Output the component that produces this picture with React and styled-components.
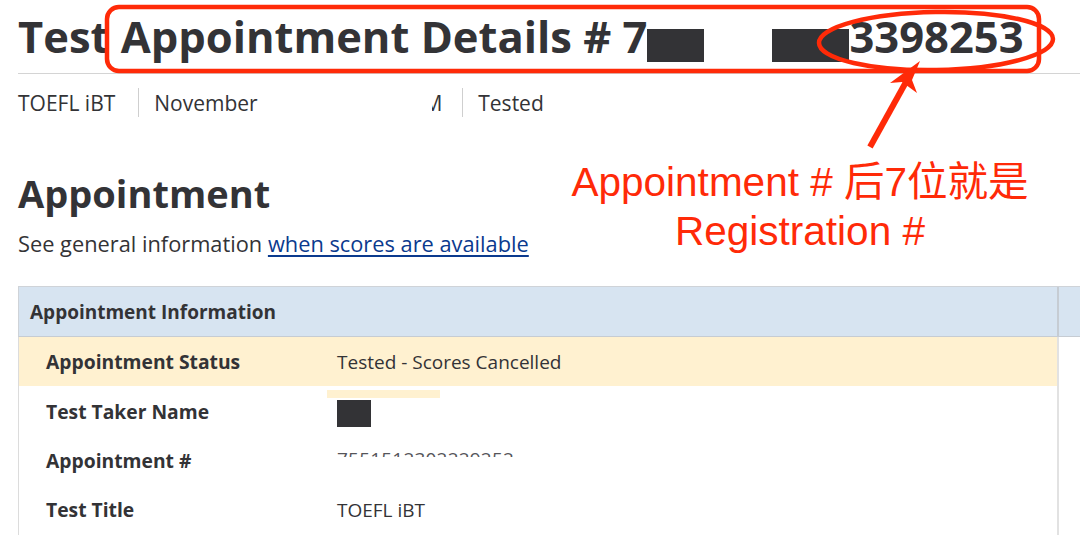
import React from 'react';
import styled, { createGlobalStyle } from 'styled-components';

const GlobalStyle = createGlobalStyle`
  html, body {
    margin: 0;
    padding: 0;
    background: #fff;
    overflow: hidden;
  }

  body {
    font-family: 'Open Sans', 'Noto Sans', sans-serif;
    color: #333336;
  }
`;

const Page = styled.div`
  position: relative;
  width: 1080px;
  height: 535px;
  overflow: hidden;
  padding-left: 18px;
  box-sizing: border-box;
`;

const Title = styled.h1`
  margin: 0;
  padding: 10px 0 10px;
  font-size: 43.5px;
  line-height: 53px;
  font-weight: 700;
  white-space: nowrap;
  border-bottom: 1px solid #d4d4d4;
`;

const Redact = styled.span`
  display: inline-block;
  width: ${(p) => p.$w}px;
  height: ${(p) => p.$h || 33}px;
  margin-left: ${(p) => p.$gap || 0}px;
  background: #333336;
  vertical-align: ${(p) => p.$v ?? -9}px;
`;

const MetaRow = styled.div`
  display: flex;
  align-items: center;
  margin-top: 14px;
  height: 29px;
  font-size: 21px;
  white-space: nowrap;
`;

const MetaItem = styled.span`
  display: inline-flex;
  align-items: center;
  width: ${(p) => (p.$w ? `${p.$w}px` : 'auto')};
`;

const MetaSep = styled.span`
  width: 1px;
  height: 29px;
  background: #cfcfcf;
  margin: 0 15px 0 ${(p) => p.$left || 20}px;
`;

const CutGlyph = styled.span`
  display: inline-block;
  width: 10px;
  overflow: hidden;
  margin-left: auto;
  direction: rtl;
`;

const SectionTitle = styled.h2`
  margin: 53px 0 0;
  font-size: 38px;
  line-height: 46px;
  font-weight: 700;
`;

const Lead = styled.p`
  margin: 14px 0 0;
  font-size: 21.8px;
  line-height: 28px;
  white-space: nowrap;

  a {
    color: #0b3a8e;
    text-decoration: underline;
    text-underline-offset: 3px;
  }
`;

const Table = styled.div`
  margin-top: 28px;
  display: grid;
  grid-template-columns: 1041px 80px;
  border-top: 1px solid #cfd3d8;
`;

const HeadCell = styled.div`
  height: 49px;
  display: flex;
  align-items: center;
  padding-left: 11px;
  background: #d7e4f1;
  border-bottom: 1px solid #c6ccd3;
  border-left: ${(p) => (p.$first ? '1px solid #cfd3d8' : 'none')};
  border-right: ${(p) => (p.$first ? '2px solid #c6ccd3' : 'none')};
  font-size: 19px;
  font-weight: 700;
  box-sizing: content-box;
`;

const Body = styled.div`
  border-left: 1px solid #dcdcdc;
  border-right: 2px solid #e2e2e2;
`;

const Row = styled.div`
  display: grid;
  grid-template-columns: 318px 1fr;
  height: 49.4px;
  align-items: center;
  background: ${(p) => (p.$highlight ? '#fff1d0' : '#fff')};
  font-size: 19px;
`;

const Label = styled.div`
  padding-left: 27px;
  font-weight: 700;
  font-size: 19.3px;
`;

const Value = styled.div`
  position: relative;
  height: 100%;
  display: flex;
  align-items: center;
`;

const YellowStrip = styled.span`
  position: absolute;
  left: -10px;
  top: 4px;
  width: 113px;
  height: 8px;
  background: #fff1d0;
`;

const NameBlock = styled.span`
  display: inline-block;
  width: 34px;
  height: 27px;
  background: #333336;
  margin-top: 4px;
`;

const CutNumber = styled.span`
  display: inline-block;
  height: 4px;
  overflow: hidden;
  transform: translateY(-5px);

  span {
    display: block;
    margin-top: -7px;
    line-height: 26px;
    letter-spacing: 0.2px;
    color: #55555a;
  }
`;

const Filler = styled.div`
  height: 200px;
`;

const Overlay = styled.svg`
  position: absolute;
  left: 0;
  top: 0;
  pointer-events: none;
`;

const Note = styled.div`
  position: absolute;
  left: 555px;
  top: 158px;
  width: 490px;
  text-align: center;
  color: #ff2a08;
  font-family: 'Liberation Sans', Arial, 'Noto Sans CJK SC', sans-serif;
  font-size: 40.5px;
  line-height: 49px;
  white-space: nowrap;
`;

const rows = [
  { label: 'Appointment Status', value: 'Tested - Scores Cancelled', highlight: true },
  { label: 'Test Taker Name', kind: 'name' },
  { label: 'Appointment #', kind: 'number' },
  { label: 'Test Title', value: 'TOEFL iBT' },
];

const renderValue = (row) => {
  if (row.kind === 'name') {
    return (
      <>
        <YellowStrip />
        <NameBlock />
      </>
    );
  }
  if (row.kind === 'number') {
    return (
      <CutNumber>
        <span>7551512302229252</span>
      </CutNumber>
    );
  }
  return row.value;
};

const App = () => {
  return (
    <Page>
      <GlobalStyle />
      <Title>
        Test Appointment Details # 7<Redact $w={57} />
        <Redact $w={77} $gap={68} />
        3398253
      </Title>

      <MetaRow>
        <MetaItem>TOEFL iBT</MetaItem>
        <MetaSep $left={23} />
        <MetaItem $w={288}>
          November
          <CutGlyph>M</CutGlyph>
        </MetaItem>
        <MetaSep />
        <MetaItem>Tested</MetaItem>
      </MetaRow>

      <SectionTitle>Appointment</SectionTitle>
      <Lead>
        See general information <a href="#scores">when scores are available</a>
      </Lead>

      <Table>
        <HeadCell $first>Appointment Information</HeadCell>
        <HeadCell />
        <Body>
          {rows.map((row) => (
            <Row key={row.label} $highlight={row.highlight}>
              <Label>{row.label}</Label>
              <Value>{renderValue(row)}</Value>
            </Row>
          ))}
          <Filler />
        </Body>
      </Table>

      <Overlay width="1080" height="535" viewBox="0 0 1080 535">
        <rect x="107" y="7" width="932" height="64" rx="12" fill="none" stroke="#ff2a08" strokeWidth="4.5" />
        <ellipse cx="936" cy="41" rx="117" ry="29" fill="none" stroke="#ff2a08" strokeWidth="4.5" transform="rotate(-1 936 41)" />
        <line x1="870" y1="147" x2="906" y2="82" stroke="#ff2a08" strokeWidth="6" strokeLinecap="butt" />
        <polygon points="920,61 890,83 902,82 917,93 912,80" fill="#ff2a08" />
      </Overlay>

      <Note>
        Appointment # 后7位就是
        <br />
        Registration #
      </Note>
    </Page>
  );
};

export default App;
